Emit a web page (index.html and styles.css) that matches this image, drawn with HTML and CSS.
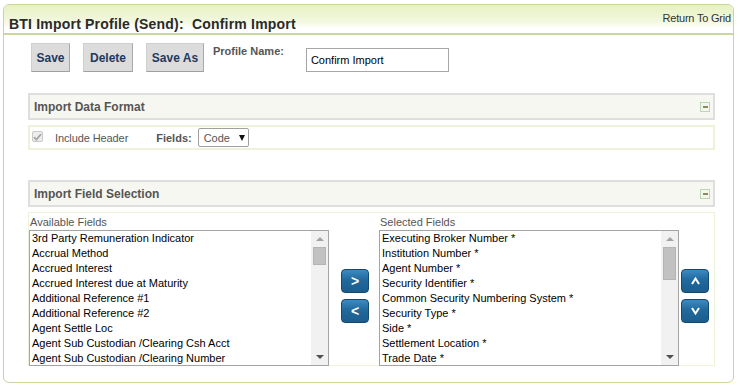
FILE: index.html
```html
<!DOCTYPE html>
<html lang="en">
<head>
    <meta charset="UTF-8">
    <title>BTI Import Profile (Send): Confirm Import</title>
    <link rel="stylesheet" href="styles.css">
</head>
<body>
    <div class="panel">
        <div class="panel-header">
            <div class="panel-title">BTI Import Profile (Send):&nbsp; Confirm Import</div>
            <a class="return-link" href="#">Return To Grid</a>
        </div>

        <div class="toolbar">
            <button class="btn btn-save">Save</button>
            <button class="btn btn-delete">Delete</button>
            <button class="btn btn-saveas">Save As</button>
            <label class="profile-label" for="profile-name">Profile Name:</label>
            <input type="text" id="profile-name" class="profile-input" value="Confirm Import">
        </div>

        <div class="section">
            <div class="section-header">
                <span>Import Data Format</span>
                <span class="collapse"></span>
            </div>
            <div class="section-body format-body">
                <span class="checkbox"><svg width="9" height="8" viewBox="0 0 9 8"><path d="M1 4.2 L3.4 6.6 L8 1.2" fill="none" stroke="#a7a7a7" stroke-width="1.8"/></svg></span>
                <span class="check-label">Include Header</span>
                <span class="fields-label">Fields:</span>
                <span class="select">Code <span class="select-arrow"></span></span>
            </div>
        </div>

        <div class="section section-fields">
            <div class="section-header">
                <span>Import Field Selection</span>
                <span class="collapse"></span>
            </div>
            <div class="section-body fields-body">
                <div class="field-col">
                    <div class="field-label">Available Fields</div>
                    <div class="listbox">
                        <ul class="options">
                            <li>3rd Party Remuneration Indicator</li>
                            <li>Accrual Method</li>
                            <li>Accrued Interest</li>
                            <li>Accrued Interest due at Maturity</li>
                            <li>Additional Reference #1</li>
                            <li>Additional Reference #2</li>
                            <li>Agent Settle Loc</li>
                            <li>Agent Sub Custodian /Clearing Csh Acct</li>
                            <li>Agent Sub Custodian /Clearing Number</li>
                        </ul>
                        <div class="scrollbar">
                            <span class="arrow arrow-up"></span>
                            <div class="track"><span class="thumb" style="height: 18px"></span></div>
                            <span class="arrow arrow-down"></span>
                        </div>
                    </div>
                </div>

                <div class="move-buttons">
                    <button class="blue-btn">&gt;</button>
                    <button class="blue-btn">&lt;</button>
                </div>

                <div class="field-col">
                    <div class="field-label">Selected Fields</div>
                    <div class="listbox">
                        <ul class="options">
                            <li>Executing Broker Number *</li>
                            <li>Institution Number *</li>
                            <li>Agent Number *</li>
                            <li>Security Identifier *</li>
                            <li>Common Security Numbering System *</li>
                            <li>Security Type *</li>
                            <li>Side *</li>
                            <li>Settlement Location *</li>
                            <li>Trade Date *</li>
                        </ul>
                        <div class="scrollbar">
                            <span class="arrow arrow-up"></span>
                            <div class="track"><span class="thumb" style="height: 33px"></span></div>
                            <span class="arrow arrow-down"></span>
                        </div>
                    </div>
                </div>

                <div class="order-buttons">
                    <button class="blue-btn"><svg width="9" height="8" viewBox="0 0 9 8"><path d="M1 7 L4.5 1.5 L8 7" fill="none" stroke="#fff" stroke-width="2"/></svg></button>
                    <button class="blue-btn"><svg width="9" height="8" viewBox="0 0 9 8"><path d="M1 1 L4.5 6.5 L8 1" fill="none" stroke="#fff" stroke-width="2"/></svg></button>
                </div>
            </div>
        </div>
    </div>
</body>
</html>
```

FILE: styles.css
```css
body {
    margin: 0;
    font-family: "Liberation Sans", Arial, sans-serif;
    background: #fff;
    color: #333;
}

.panel {
    margin: 4px 0 0 3px;
    width: 729px;
    height: 377px;
    border: 1px solid #c9d69a;
    border-radius: 6px;
    overflow: hidden;
}

.panel-header {
    display: flex;
    justify-content: space-between;
    align-items: flex-start;
    height: 28px;
    border-bottom: 2px solid #cbd89c;
    background: linear-gradient(to bottom, #e6f1c0 0%, #f3f8e0 60%, #fff 84%);
}

.panel-title {
    padding: 11px 0 0 5px;
    font-size: 14px;
    line-height: 16px;
    letter-spacing: 0.2px;
    font-weight: bold;
    color: #2a2a2a;
}

.return-link {
    padding: 7px 2px 0 0;
    font-size: 11px;
    line-height: 13px;
    letter-spacing: -0.2px;
    color: #333;
    text-decoration: none;
}

.toolbar {
    display: flex;
    align-items: flex-start;
    margin: 8px 0 0 27px;
}

.btn {
    height: 29px;
    margin-right: 13px;
    padding: 0;
    font-family: inherit;
    font-size: 12px;
    font-weight: bold;
    color: #1f3a5c;
    background: #dcdcdc;
    border: 1px solid #cfcfcf;
    border-right-color: #a9a9a9;
    border-bottom-color: #a0a0a0;
    cursor: pointer;
}

.btn-save { width: 39px; }
.btn-delete { width: 50px; }
.btn-saveas { width: 58px; margin-right: 0; }

.profile-label {
    margin: 1px 0 0 9px;
    font-size: 11px;
    line-height: 14px;
    font-weight: bold;
    color: #555;
}

.profile-input {
    width: 143px;
    height: 24px;
    margin: 5px 0 0 22px;
    padding: 0 0 0 4px;
    box-sizing: border-box;
    font-family: inherit;
    font-size: 11px;
    color: #000;
    border: 1px solid #a6a6a6;
    outline: none;
}

.section {
    width: 687px;
    margin: 21px 0 0 24px;
}

.section-fields {
    margin-top: 30px;
}

.section-header {
    display: flex;
    justify-content: space-between;
    align-items: center;
    height: 27px;
    box-sizing: border-box;
    padding: 0 3px 0 4px;
    font-size: 12px;
    font-weight: bold;
    color: #555;
    background: #f7f7f1;
    border: 2px solid #dedede;
}

.collapse {
    position: relative;
    width: 8px;
    height: 8px;
    border: 1px solid #bcd5b4;
    background: #f3f6ec;
}

.collapse::after {
    content: "";
    position: absolute;
    left: 2px;
    top: 3px;
    width: 5px;
    height: 2px;
    background: #8c8a5a;
}

.section-body {
    margin-top: 5px;
    border: 2px solid #edf2d8;
}

.format-body {
    display: flex;
    align-items: center;
    height: 25px;
    box-sizing: border-box;
    padding-left: 2px;
    font-size: 11px;
    color: #555;
}

.checkbox {
    display: flex;
    align-items: center;
    justify-content: center;
    width: 9px;
    height: 9px;
    margin-top: -2px;
    border: 1px solid #c8c8c8;
    border-radius: 2px;
    background: #eeeeee;
}

.check-label {
    margin-left: 12px;
    letter-spacing: -0.1px;
}

.fields-label {
    margin-left: 28px;
    font-weight: bold;
}

.select {
    display: flex;
    align-items: center;
    width: 51px;
    height: 19px;
    box-sizing: border-box;
    margin-left: 6px;
    padding-left: 5px;
    border: 1px solid #a0a0a0;
    border-radius: 2px;
    color: #555;
    background: #fff;
}

.select-arrow {
    width: 0;
    height: 0;
    margin-left: 9px;
    border-left: 3.5px solid transparent;
    border-right: 3.5px solid transparent;
    border-top: 6px solid #111;
}

.fields-body {
    display: flex;
    height: 154px;
    box-sizing: border-box;
    border-width: 1px;
    padding-left: 0;
}

.field-col {
    width: 300px;
}

.field-label {
    height: 17px;
    box-sizing: border-box;
    padding: 2px 0 0 1px;
    font-size: 11px;
    line-height: 15px;
    color: #555;
}

.listbox {
    display: flex;
    height: 136px;
    box-sizing: border-box;
    border: 1px solid #a4a4a4;
    background: #fff;
}

.options {
    flex: 1;
    margin: 0;
    padding: 0 0 0 2px;
    list-style: none;
    overflow: hidden;
    font-size: 11px;
    line-height: 15px;
    color: #000;
    white-space: nowrap;
}

.scrollbar {
    display: flex;
    flex-direction: column;
    width: 17px;
    background: #f1f1f1;
}

.arrow {
    display: flex;
    justify-content: center;
    align-items: center;
    height: 16px;
}

.arrow::before {
    content: "";
    width: 0;
    height: 0;
    border-left: 4px solid transparent;
    border-right: 4px solid transparent;
}

.arrow-up::before {
    border-bottom: 4px solid #a3a3a3;
}

.arrow-down::before {
    border-top: 4px solid #505050;
}

.track {
    flex: 1;
    padding: 0 2px;
}

.thumb {
    display: block;
    background: #c1c1c1;
    border: 1px solid #b4b4b4;
    box-sizing: border-box;
}

.move-buttons,
.order-buttons {
    display: flex;
    flex-direction: column;
    gap: 6px;
    padding-top: 56px;
}

.move-buttons {
    margin: 0 10px 0 12px;
}

.order-buttons {
    margin-left: 2px;
}

.blue-btn {
    display: flex;
    align-items: center;
    justify-content: center;
    width: 28px;
    height: 24px;
    padding: 0 0 1px 0;
    font-family: inherit;
    font-size: 14px;
    font-weight: bold;
    color: #fff;
    background: linear-gradient(to bottom, #3a8bc3 0%, #22699c 45%, #1b5d8d 100%);
    border: 1px solid #16486d;
    border-radius: 4px;
    cursor: pointer;
}
```
